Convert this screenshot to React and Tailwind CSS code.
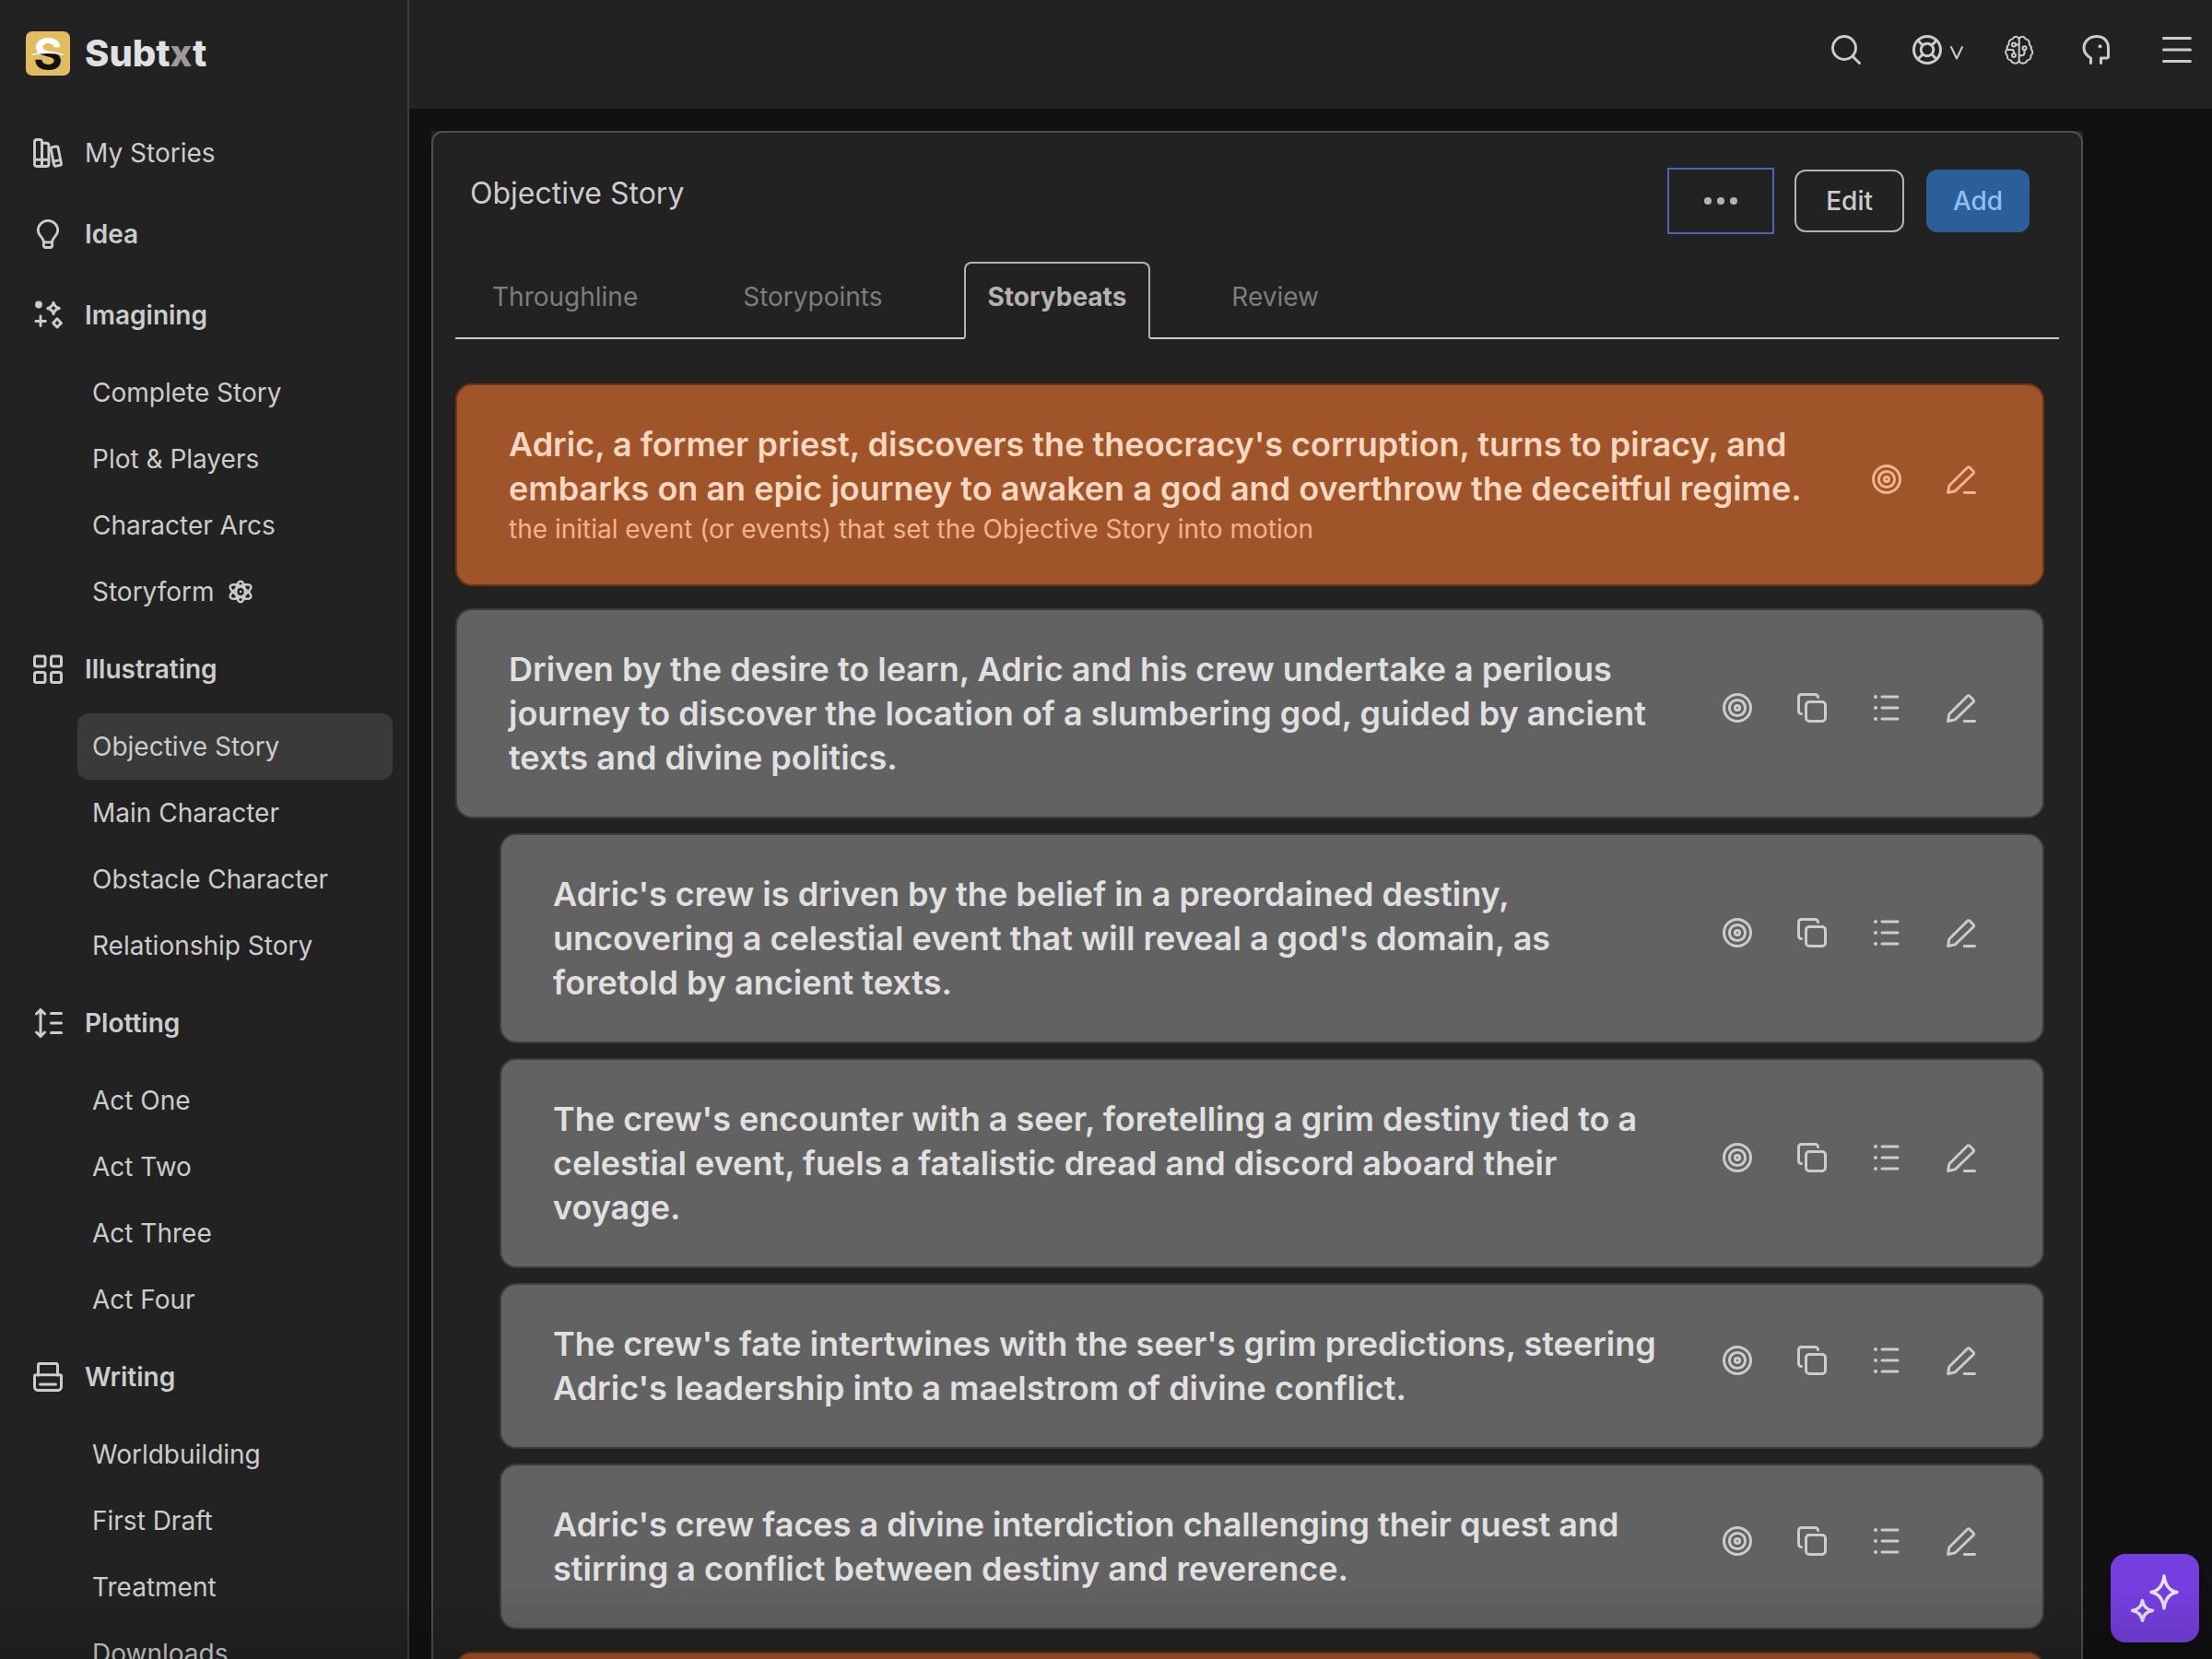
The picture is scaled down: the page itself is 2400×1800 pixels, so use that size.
import React from "react";

function Svg({ children, size = 32, sw = 3, className = "" }) {
  return (
    <svg
      width={size}
      height={size}
      viewBox="0 0 32 32"
      fill="none"
      stroke="currentColor"
      strokeWidth={sw}
      strokeLinecap="round"
      strokeLinejoin="round"
      aria-hidden="true"
      className={"shrink-0 " + className}
    >
      {children}
    </svg>
  );
}

const Books = () => (
  <Svg sw={2.9}>
    <rect x="1.5" y="1.5" width="8" height="29" rx="2.4" />
    <path d="M9.5 5.3h5a2.4 2.4 0 0 1 2.4 2.4v20.4a2.4 2.4 0 0 1-2.4 2.4H7" />
    <path d="M1.5 23.3h15.4M9.5 5.3v25" />
    <path d="M20.9 9.6l3.9-.7a2 2 0 0 1 2.3 1.6l3.3 16.6a2 2 0 0 1-1.6 2.3l-3.9.8a2 2 0 0 1-2.3-1.6L19.3 12a2 2 0 0 1 1.6-2.4z" />
    <path d="M21.7 25.2l7.8-1.6" />
  </Svg>
);

const Bulb = () => (
  <Svg sw={2.8}>
    <path d="M11.4 24.5c0-4.5-6.1-6.9-6.1-12.4a10.7 10.7 0 0 1 21.4 0c0 5.5-6.1 7.9-6.1 12.4" />
    <path d="M11.4 24.5v4a2 2 0 0 0 2 2h5.2a2 2 0 0 0 2-2v-4M11.4 24.9h9.2" />
  </Svg>
);

const Sparks = () => (
  <Svg sw={2.9}>
    <circle cx="6" cy="4.5" r="3.9" fill="currentColor" stroke="none" />
    <path d="M8 17v10.500M2.900 22.500h10.500" />
    <path d="M22 2.300q1 4.700 6.300 6.200q-5.300 1.300-6.300 6.200q-1-4.900-6.300-6.200q5.300-1.500 6.300-6.200z" />
    <path d="M26 19.800l4.400 4.600-4.400 4.600-4.400-4.600z" />
  </Svg>
);

const Grid = () => (
  <Svg>
    <rect x="1.5" y="2" width="11.5" height="11" rx="2" />
    <rect x="19.5" y="2" width="11" height="11" rx="2" />
    <rect x="1.5" y="19.500" width="11.5" height="11" rx="2" />
    <rect x="19.5" y="19.500" width="11" height="11" rx="2" />
  </Svg>
);

const LineHeight = () => (
  <Svg>
    <path d="M8 1.5v29M3.5 6L8 1.5L12.5 6M3.5 26L8 30.5L12.5 26M19.5 5.500h11M19.5 16h11M19.5 26.500h11" />
  </Svg>
);

const Typewriter = () => (
  <Svg>
    <path d="M5.500 14V3a1.500 1.500 0 0 1 1.500-1.500h18A1.500 1.500 0 0 1 26.500 3v11" />
    <path d="M1.500 15a1.200 1.200 0 0 1 1.200-1.200h26.600a1.200 1.200 0 0 1 1.200 1.200v11.500a4 4 0 0 1-4 4h-21a4 4 0 0 1-4-4z" />
    <path d="M7.500 24h17" />
  </Svg>
);

const Atom = () => (
  <Svg size={28} sw={2.8}>
    <ellipse cx="16" cy="16" rx="5.500" ry="13" />
    <ellipse cx="16" cy="16" rx="6" ry="14.500" transform="rotate(60 16 16)" />
    <ellipse cx="16" cy="16" rx="6" ry="14.500" transform="rotate(-60 16 16)" />
    <circle cx="16" cy="16" r="1.400" fill="currentColor" stroke="none" />
  </Svg>
);

const Target = () => (
  <Svg sw={3}>
    <circle cx="16" cy="16" r="14.500" />
    <circle cx="16" cy="16" r="8.600" />
    <circle cx="16" cy="16" r="2.600" />
  </Svg>
);

const Copy = () => (
  <Svg sw={3}>
    <path d="M4.500 22.500a3 3 0 0 1-3-3V4.500a3 3 0 0 1 3-3h15a3 3 0 0 1 3 3" />
    <rect x="9.500" y="9.500" width="21" height="21" rx="3.500" />
  </Svg>
);

const List = () => (
  <Svg sw={3}>
    <path d="M11 4h17M11 16h17M11 28h17" />
    <path d="M4 4h.01M4 16h.01M4 28h.01" strokeWidth="4" />
  </Svg>
);

const Pencil = () => (
  <Svg sw={2.9}>
    <path d="M1.600 30.500l1.200-7.500L22.600 3.300a1.800 1.800 0 0 1 2.500 0l3.900 3.900a1.800 1.800 0 0 1 0 2.500L9.200 28.900z" />
    <path d="M19.300 30.500h11.200" />
  </Svg>
);

const SearchIcon = () => (
  <Svg sw={2.900}>
    <circle cx="14" cy="14" r="12.500" />
    <path d="M23 23l7.500 7.500" />
  </Svg>
);

const LifeRing = () => (
  <Svg sw={3}>
    <circle cx="16" cy="16" r="14.500" />
    <circle cx="16" cy="16" r="6.800" />
    <path d="M5.800 5.800l5.300 5.300M26.200 5.800l-5.300 5.300M5.800 26.200l5.300-5.300M26.200 26.200l-5.300-5.300" />
  </Svg>
);

const Brain = () => (
  <Svg sw={2}>
    <path d="M15.700 3.500v25.500M15.700 4c-1.500-3-5.500-3-7 .2C5.700 4.700 3.900 7.500 4.600 10.500 2.500 12 2.200 13.600 2.800 15 .7 16.800.5 20.500 2.900 22.300c-.3 3 1.600 5 4 5.300 1.600 3.800 7.300 4.200 8.800.600" />
    <path d="M15.700 4c1.500-3 5.500-3 7 .2 3 .5 4.800 3.300 4.100 6.300 2.100 1.500 2.400 3.100 1.800 4.500 2.100 1.800 2.300 5.500-.1 7.300.3 3-1.600 5-4 5.300-1.600 3.800-7.300 4.200-8.800.600" />
    <circle cx="10" cy="10.500" r="2" />
    <circle cx="10" cy="22" r="2" />
    <circle cx="21.500" cy="14.300" r="2" />
    <path d="M12 10.500h3.500M10 20v-2q0-2-2-2H3.500M21.500 16.300v3q0 3-3 3h-2.500" />
  </Svg>
);

const Head = () => (
  <Svg sw={3}>
    <path d="M9.500 30.500v-5.500C4.500 22 2 18.500 2 14 2 7 8 1.500 16 1.500S28.500 7 28.500 14v9a2 2 0 0 1-2 2H20.500v5.500" />
    <circle cx="19.500" cy="12.300" r="2" fill="currentColor" stroke="none" />
  </Svg>
);

const Menu = () => (
  <Svg sw={3}>
    <path d="M1.500 3.500h29M1.500 16h29M1.500 28.500h29" />
  </Svg>
);

const sections = [
  { icon: Books, label: "My Stories", plain: true, items: [] },
  { icon: Bulb, label: "Idea", items: [] },
  { icon: Sparks, label: "Imagining", items: ["Complete Story", "Plot & Players", "Character Arcs", "Storyform"] },
  { icon: Grid, label: "Illustrating", items: ["Objective Story", "Main Character", "Obstacle Character", "Relationship Story"] },
  { icon: LineHeight, label: "Plotting", items: ["Act One", "Act Two", "Act Three", "Act Four"] },
  { icon: Typewriter, label: "Writing", items: ["Worldbuilding", "First Draft", "Treatment", "Downloads"] },
];

function Logo() {
  return (
    <svg width="48" height="48" viewBox="0 0 48 48" aria-hidden="true">
      <defs>
        <linearGradient id="logo-split" gradientUnits="userSpaceOnUse" x1="24" y1="0" x2="24" y2="48">
          <stop offset="0.48" stopColor="#ffffff" />
          <stop offset="0.48" stopColor="#111111" />
        </linearGradient>
      </defs>
      <rect width="48" height="48" rx="7" fill="#e3bc62" />
      <text
        x="24"
        y="42"
        fontFamily="Inter, sans-serif"
        fontWeight="700"
        fontSize="48"
        textAnchor="middle"
        fill="url(#logo-split)"
      >
        S
      </text>
      <path d="M7 25.500Q22 18.500 41 25.500Q25 21.500 7 25.500Z" fill="#fff" stroke="#fff" strokeWidth="1" strokeLinejoin="round" />
    </svg>
  );
}

function Sidebar() {
  return (
    <aside className="w-[444px] shrink-0 overflow-hidden border-r-2 border-[#3d3d3d] bg-[#222222]">
      <a href="#home" className="flex h-[122px] items-start gap-4 pt-[34px] pl-7">
        <Logo />
        <span className="text-[40px] leading-[48px] font-extrabold text-[#e0e0e0]">
          Subt<span className="text-[#999999]">x</span>t
        </span>
      </a>
      <nav aria-label="Story">
        {sections.map(({ icon: Icon, label, plain, items }) => (
          <div key={label}>
            <a
              href={"#" + label}
              className={"flex h-[88px] items-center gap-6 pl-9 " + (plain ? "" : "font-semibold")}
            >
              <Icon />
              {label}
            </a>
            {items.length > 0 && (
              <ul className="my-1 mr-4 ml-[84px]">
                {items.map((item) => (
                  <li key={item}>
                    <a
                      href={"#" + item}
                      className={
                        "flex h-[72px] items-center gap-3.5 rounded-xl px-4 " +
                        (item === "Objective Story" ? "bg-[#3a3a3a]" : "")
                      }
                    >
                      {item}
                      {item === "Storyform" && <Atom />}
                    </a>
                  </li>
                ))}
              </ul>
            )}
          </div>
        ))}
      </nav>
    </aside>
  );
}

function Header() {
  return (
    <header className="flex h-[118px] shrink-0 items-start justify-end bg-[#222222] pt-[38px] pr-[22px]">
      <button type="button" aria-label="Search"><SearchIcon /></button>
      <button type="button" aria-label="Help" className="ml-14 flex items-center gap-2">
        <LifeRing />
        <svg width="16" height="32" viewBox="0 0 16 32" fill="none" stroke="currentColor" strokeWidth="2" strokeLinecap="round" strokeLinejoin="round" aria-hidden="true">
          <path d="M2 13l6 12.500l6-12.500" />
        </svg>
      </button>
      <button type="button" aria-label="AI" className="ml-11"><Brain /></button>
      <button type="button" aria-label="Muse" className="ml-[52px]"><Head /></button>
      <button type="button" aria-label="Menu" className="ml-[55px]"><Menu /></button>
    </header>
  );
}

function Action({ label, children }) {
  return (
    <button type="button" aria-label={label} className="flex w-[81px] justify-center">
      {children}
    </button>
  );
}

function Beat({ text, note, orange, indent }) {
  return (
    <li
      className={
        "flex items-center rounded-[18px] border-2 py-10 pr-12 pl-14 " +
        (orange ? "border-[#6f3417] bg-[#9f5429] text-[#f2b48f] " : "border-[#3c3c3c] bg-[#626262] text-[#cccccc] ") +
        (indent ? "ml-12" : "")
      }
    >
      <div className="mr-9 min-w-0 flex-1">
        <h3 className={"text-[36px] leading-[48px] font-semibold " + (orange ? "text-[#f9d7c0]" : "text-[#e0e0e0]")}>
          {text}
        </h3>
        {note && <p className="leading-10">{note}</p>}
      </div>
      <div className="mb-3 flex">
        <Action label="Focus"><Target /></Action>
        {!orange && (
          <>
            <Action label="Duplicate"><Copy /></Action>
            <Action label="Outline"><List /></Action>
          </>
        )}
        <Action label="Edit beat"><Pencil /></Action>
      </div>
    </li>
  );
}

const group = [
  { text: "Driven by the desire to learn, Adric and his crew undertake a perilous journey to discover the location of a slumbering god, guided by ancient texts and divine politics." },
  { indent: true, text: "Adric's crew is driven by the belief in a preordained destiny, uncovering a celestial event that will reveal a god's domain, as foretold by ancient texts." },
  { indent: true, text: "The crew's encounter with a seer, foretelling a grim destiny tied to a celestial event, fuels a fatalistic dread and discord aboard their voyage." },
  { indent: true, text: "The crew's fate intertwines with the seer's grim predictions, steering Adric's leadership into a maelstrom of divine conflict." },
  { indent: true, text: "Adric's crew faces a divine interdiction challenging their quest and stirring a conflict between destiny and reverence." },
];

function Tab({ children, active }) {
  return (
    <button
      type="button"
      role="tab"
      aria-selected={!!active}
      className={
        "h-[84px] border-2 px-6 pb-2 " +
        (active
          ? "rounded-t-lg border-[#b3b3b3] border-b-[#222222] bg-[#222222] font-bold text-[#b3b3b3]"
          : "border-transparent text-[#7d7d7d]")
      }
    >
      {children}
    </button>
  );
}

export default function App() {
  return (
    <div className="relative flex h-screen overflow-hidden bg-[#111111] font-['Inter','Liberation_Sans',sans-serif] text-[28px] leading-10 text-[#cccccc]">
      <Sidebar />
      <div className="flex min-w-0 flex-1 flex-col">
        <Header />
        <main className="mt-6 mr-[140px] ml-6 min-h-0 flex-1 overflow-hidden bg-[#222222]">
          <section className="rounded-t-[12px] border-2 border-b-0 border-[#4f4f4f] px-6">
            <div className="flex items-start justify-between pr-8 pl-4">
              <h2 className="mt-11 text-[32px] leading-[44px]">Objective Story</h2>
              <div className="mt-[38px] flex items-center">
                <button type="button" aria-label="More" className="flex h-[72px] w-[116px] items-center justify-center gap-1.5 border-2 border-[#4f63b8] text-[#b3b3b3]">
                  <span className="size-2 rounded-full bg-current" />
                  <span className="size-2 rounded-full bg-current" />
                  <span className="size-2 rounded-full bg-current" />
                </button>
                <button type="button" className="ml-[22px] h-[68px] rounded-xl border-2 border-[#b3b3b3] px-8 font-medium">Edit</button>
                <button type="button" className="ml-6 h-[68px] w-28 rounded-xl bg-[#2b5f97] font-medium text-[#8cc0f2]">Add</button>
              </div>
            </div>
            <div role="tablist" className="mt-[30px] flex gap-[62px] border-b-2 border-[#cccccc] pl-3.5 [&>*]:-mb-0.5">
              <Tab>Throughline</Tab>
              <Tab>Storypoints</Tab>
              <Tab active>Storybeats</Tab>
              <Tab>Review</Tab>
            </div>
            <ul className="mt-12 mr-4 flex flex-col gap-6">
              <Beat
                orange
                text="Adric, a former priest, discovers the theocracy's corruption, turns to piracy, and embarks on an epic journey to awaken a god and overthrow the deceitful regime."
                note="the initial event (or events) that set the Objective Story into motion"
              />
              <li>
                <ul className="flex flex-col gap-4">
                  {group.map((beat) => (
                    <Beat key={beat.text} {...beat} />
                  ))}
                </ul>
              </li>
              <li className="h-[220px] rounded-[18px] border-2 border-[#6f3417] bg-[#9f5429]" />
            </ul>
          </section>
        </main>
      </div>
      <button
        type="button"
        aria-label="Assistant"
        className="absolute right-[14px] bottom-[18px] flex size-24 items-center justify-center rounded-2xl bg-[#753fe0] text-[#eae2fb] shadow-lg"
      >
        <svg width="52" height="52" viewBox="0 0 52 52" fill="none" stroke="currentColor" strokeWidth="3.4" strokeLinejoin="round" aria-hidden="true">
          <path d="M36 2q2 15.500 14 17.500q-12 2-14 17.500q-2-15.500-14-17.500q12-2 14-17.500z" />
          <path d="M12.500 28.500q1.500 9.500 11 11q-9.500 1.500-11 11q-1.500-9.500-11-11q9.500-1.500 11-11z" />
        </svg>
      </button>
      <div className="pointer-events-none absolute inset-x-0 bottom-0 h-20 bg-linear-to-b from-transparent to-black/15" />
    </div>
  );
}
